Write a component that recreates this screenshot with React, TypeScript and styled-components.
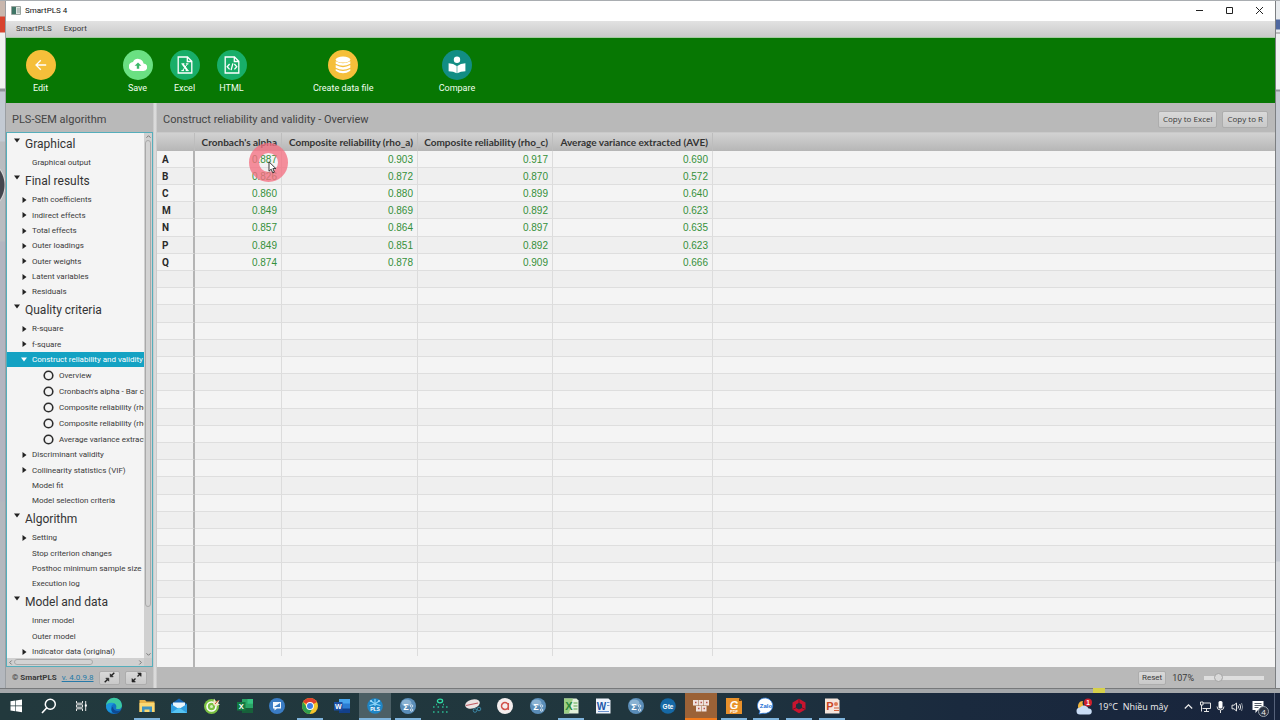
import React from "react";
import styled, { createGlobalStyle, css } from "styled-components";

const UI = `Roboto, "Open Sans", sans-serif`;
const WIDE = `"Open Sans", "Noto Sans", sans-serif`;
const HEAD = `Roboto, "Liberation Sans", sans-serif`;

const GlobalStyle = createGlobalStyle`
  *, *::before, *::after { box-sizing: border-box; }
  body { margin: 0; font-family: ${UI}; font-size: 8px; color: #3a3a3a; }
  button, input { font: inherit; color: inherit; }
  ul { list-style: none; margin: 0; padding: 0; }
  svg { display: block; flex: none; }
`;

/* ---------- frame ---------- */

const Screen = styled.div`
  height: 100vh;
  min-height: 480px;
  display: flex;
  flex-direction: column;
  overflow: hidden;
  background: #a9adb1;
`;

const Desktop = styled.div`
  flex: 1;
  min-height: 0;
  display: flex;
  padding-top: 1px;
`;

const LeftSliver = styled.div`
  width: 6px;
  background:
    radial-gradient(circle at -22px 184px, #45464e 26px, #d8d8d8 27px, transparent 28px),
    linear-gradient(
      #c9b7ae 0 15px, #d8432f 16px 31px, #f1f1f1 32px 87px, #8f9499 88px 90px,
      #c3cad3 91px 140px, #b9bcc0 141px 240px, #b3b5c0 241px 500px, #b4b8be 501px 100%
    );
  border-right: 1px solid #9b9fa3;
`;

const RightSliver = styled.div`
  width: 5px;
  border-left: 1px solid #7c7f82;
  background: linear-gradient(
    #e8ebee 0 18px, #4f68a0 19px 28px, #e8ebee 29px 31px, #888 32px, #f0f1f2 33px 88px,
    #8f9499 89px 90px, #c4c9d2 91px 560px, #d6d9de 561px 100%
  );
`;

const BottomSliver = styled.div`
  height: 5px;
  display: flex;
  justify-content: flex-end;
  padding-right: 175px;
  background: linear-gradient(#77797b 0 1px, #a5a8ab 1px 5px);
  &::after {
    content: "";
    width: 12px;
    background: #d6d04a;
  }
`;

const Window = styled.div`
  flex: 1;
  min-width: 0;
  display: flex;
  flex-direction: column;
  background: #b9b9b9;
`;

const TitleBar = styled.header`
  height: 20px;
  flex: none;
  display: flex;
  align-items: center;
  padding: 0 1px 1px 5px;
  background: #fff;
  color: #111;
`;

const TitleText = styled.h1`
  flex: 1;
  margin: 0 0 0 4px;
  font-size: 8px;
  font-weight: 400;
`;

const WindowButton = styled.button`
  width: 30px;
  height: 18px;
  padding: 0;
  border: 0;
  background: none;
  display: flex;
  align-items: center;
  justify-content: center;
`;

const MenuBar = styled.nav`
  height: 17px;
  flex: none;
  display: flex;
  align-items: center;
  gap: 12px;
  padding-left: 10px;
  background: linear-gradient(#e2e2e2, #cacaca);
  border-bottom: 1px solid #a3cba0;
`;

const MenuButton = styled.button`
  padding: 0;
  border: 0;
  background: none;
  line-height: 14px;
`;

/* ---------- toolbar ---------- */

const Toolbar = styled.div`
  height: 65px;
  flex: none;
  display: flex;
  align-items: center;
  padding: 4px 0 0 11px;
  background: #077703;
`;

const ToolGroup = styled.div<{ $before?: number }>`
  display: flex;
  margin-left: ${(p) => p.$before ?? 0}px;
`;

const ToolButton = styled.button`
  min-width: 47px;
  padding: 0;
  border: 0;
  background: none;
  color: #f2fff0;
  font-family: ${HEAD};
  font-size: 9px;
  line-height: 13px;
  display: flex;
  flex-direction: column;
  align-items: center;
  gap: 2px;
  white-space: nowrap;
`;

const Disc = styled.span<{ $color: string }>`
  width: 30px;
  height: 30px;
  border-radius: 50%;
  background: ${(p) => p.$color};
  display: flex;
  align-items: center;
  justify-content: center;
`;

/* ---------- body ---------- */

const Body = styled.div`
  flex: 1;
  min-height: 0;
  display: flex;
`;

const Side = styled.aside`
  width: 147px;
  flex: none;
  display: flex;
  flex-direction: column;
`;

const Divider = styled.div`
  width: 4px;
  flex: none;
  background: linear-gradient(90deg, #c4c4c4, #e2e2e2, #c4c4c4);
`;

const Main = styled.main`
  flex: 1;
  min-width: 0;
  display: flex;
  flex-direction: column;
`;

const PanelHead = styled.div`
  height: 29px;
  flex: none;
  display: flex;
  align-items: center;
  gap: 5px;
  padding: 3px 7px 0 6px;
`;

const PanelTitle = styled.h2`
  flex: 1;
  margin: 0;
  font-family: ${HEAD};
  font-size: 11px;
  font-weight: 400;
  color: #444;
  white-space: nowrap;
`;

const Footer = styled.footer<{ $end?: boolean }>`
  height: 21px;
  flex: none;
  display: flex;
  align-items: center;
  justify-content: ${(p) => (p.$end ? "flex-end" : "flex-start")};
  gap: 5px;
  padding: 0 ${(p) => (p.$end ? 11 : 6)}px;
  white-space: nowrap;
`;

const SmallButton = styled.button<{ $tall?: boolean }>`
  height: ${(p) => (p.$tall ? 17 : 14)}px;
  padding: 0 ${(p) => (p.$tall ? 4 : 3)}px;
  border: 1px solid #adadad;
  border-radius: 2px;
  background: linear-gradient(#d9d9d9, #c9c9c9);
  font-family: ${(p) => (p.$tall ? WIDE : UI)};
  line-height: 12px;
  display: flex;
  align-items: center;
  white-space: nowrap;
`;

const IconButton = styled(SmallButton)`
  width: 22px;
  padding: 0;
  justify-content: center;
`;

/* ---------- tree ---------- */

const TreeFrame = styled.div`
  flex: 1;
  min-height: 0;
  display: grid;
  grid-template: minmax(0, 1fr) 8px / minmax(0, 1fr) 8px;
  border: 1px solid #55aebb;
  background: #c8c8c8;
`;

const Tree = styled.div`
  overflow: hidden;
  background: #f4f4f4;
`;

const Twisty = styled.button<{ $w: number; $top?: boolean }>`
  width: ${(p) => p.$w}px;
  height: 14px;
  padding: 0 5px 0 0;
  border: 0;
  background: none;
  display: flex;
  justify-content: flex-end;
  align-items: center;
  flex: none;
  ${(p) => p.$top && css`align-self: flex-start;`}
`;

const GroupRow = styled.div`
  height: 22px;
  display: flex;
  align-items: center;
  font-size: 12px;
  color: #333;
  white-space: nowrap;
`;

const ItemRow = styled.li<{ $selected?: boolean }>`
  height: 15px;
  display: flex;
  align-items: center;
  white-space: nowrap;
  &:nth-child(3n + 2) { height: 16px; }
  ${(p) => p.$selected && css`
    background: #14a2c3;
    color: #fff;
  `}
`;

const ChartRow = styled.li`
  height: 16px;
  display: flex;
  align-items: center;
  gap: 5px;
  padding-left: 36px;
  white-space: nowrap;
`;

const ScrollTrack = styled.div<{ $across?: boolean }>`
  display: flex;
  flex-direction: ${(p) => (p.$across ? "row" : "column")};
  align-items: center;
  justify-content: space-between;
  background: #d0d0d0;
`;

const Thumb = styled.div<{ $across?: boolean }>`
  ${(p) =>
    p.$across
      ? css`width: 58%; height: 6px; margin-right: auto;`
      : css`height: 89%; width: 6px; margin-bottom: auto;`}
  border: 1px solid #a9a9a9;
  border-radius: 3px;
  background: #d3d3d3;
`;

const Brand = styled.strong`
  font-family: ${HEAD};
`;

const VersionLink = styled.a`
  color: #2679a8;
`;

/* ---------- table ---------- */

const TableArea = styled.div`
  flex: 1;
  min-height: 0;
  overflow: hidden;
  background: #f4f4f4;
  border-top: 1px solid #c9c9c9;
`;

const Table = styled.table`
  width: 100%;
  table-layout: fixed;
  border-collapse: separate;
  border-spacing: 0;
`;

const HeadCell = styled.th`
  height: 18px;
  padding: 0 4px 0 0;
  background: linear-gradient(#d2d2d2, #b6b6b6);
  border-right: 1px solid #bdbdbd;
  font-family: Lato, sans-serif;
  font-size: 10px;
  line-height: 12px;
  color: #333;
  text-align: right;
  white-space: nowrap;
  &:last-child { border-right: 0; }
`;

const Row = styled.tr`
  height: 17px;
  background: #f4f4f4;
  &:nth-child(even) { background: #efefef; }
  &:nth-child(5n) { height: 18px; }
`;

const RowLabel = styled.th`
  padding: 1px 0 0 5px;
  border-right: 2px solid #b4b4b4;
  border-bottom: 1px solid #dedede;
  font-family: ${HEAD};
  font-size: 10px;
  line-height: 12px;
  color: #2a2a2a;
  text-align: left;
`;

const Cell = styled.td`
  position: relative;
  padding: 1px 4px 0 0;
  border-right: 1px solid #dcdcdc;
  border-bottom: 1px solid #dedede;
  font-family: "Liberation Sans", Arial, sans-serif;
  font-size: 10px;
  line-height: 12px;
  color: #35903a;
  text-align: right;
  &:last-child { border-right: 0; }
`;

const TailRow = styled.tr<{ $h: number }>`
  height: ${(p) => p.$h}px;
  th { padding: 0; border-right: 2px solid #b4b4b4; }
  td { padding: 0; }
  td:not(:last-child) { border-right: 1px solid #dcdcdc; }
`;

const ClickRing = styled.span`
  position: absolute;
  z-index: 1;
  top: -8px;
  right: -7px;
  width: 39px;
  height: 39px;
  border: 10px solid rgba(243, 112, 130, 0.78);
  border-radius: 50%;
  svg { position: absolute; left: 9px; top: 8px; }
`;

const Percent = styled.output`
  margin: 0 5px 0 1px;
  font-size: 9px;
`;

const ZoomSlider = styled.input`
  appearance: none;
  width: 60px;
  height: 10px;
  margin: 0;
  background: linear-gradient(#0000 3px, #dedede 3px 7px, #0000 7px);
  &::-webkit-slider-thumb {
    appearance: none;
    width: 9px;
    height: 9px;
    border: 1px solid #a4a4a4;
    border-radius: 50%;
    background: #d9d9d9;
  }
`;

/* ---------- taskbar ---------- */

const Taskbar = styled.footer`
  height: 27px;
  flex: none;
  display: flex;
  justify-content: space-between;
  background: linear-gradient(90deg, #22393d, #20363e 50%, #1a2a3e 75%, #18243c);
  color: #f0f0f0;
`;

const AppList = styled.div`
  flex: 0 1 848px;
  display: flex;
`;

type Mark = "none" | "open" | "active" | "alert";

const AppButton = styled.button<{ $mark: Mark }>`
  flex: 1;
  min-width: 0;
  padding: 0;
  border: 0;
  background: ${(p) => (p.$mark === "active" ? "#4c5f65" : p.$mark === "alert" ? "#9b6237" : "none")};
  display: flex;
  flex-direction: column;
  align-items: center;
  justify-content: space-between;
  &::before { content: ""; height: 1px; }
  &::after {
    content: "";
    height: 2px;
    width: ${(p) => (p.$mark === "open" ? "26px" : "100%")};
    background: ${(p) => (p.$mark === "none" ? "transparent" : p.$mark === "alert" ? "#f07a1c" : "#7fb4dc")};
  }
`;

const Tray = styled.div`
  display: flex;
  align-items: center;
  gap: 4px;
  padding-right: 2px;
`;

const TrayButton = styled.button<{ $after?: number }>`
  position: relative;
  padding: 0;
  border: 0;
  background: none;
  margin-right: ${(p) => p.$after ?? 0}px;
  display: flex;
  align-items: center;
  gap: 5px;
  font-family: ${WIDE};
  font-size: 9px;
  white-space: nowrap;
`;

const Badge = styled.span`
  position: absolute;
  left: 6px;
  top: 6px;
  width: 11px;
  height: 11px;
  border: 1px solid #9aa3ad;
  border-radius: 50%;
  background: #2a3342;
  font-size: 8px;
  line-height: 9px;
  text-align: center;
`;

const ShowDesktop = styled.button`
  width: 4px;
  height: 27px;
  padding: 0;
  border: 0;
  border-left: 1px solid #56627a;
  background: none;
`;

/* ---------- icons ---------- */

const Down = ({ fill = "#222" }: { fill?: string }) => (
  <svg width="6" height="5" viewBox="0 0 6 5"><path d="M0 .5h6L3 4.5z" fill={fill} /></svg>
);
const Right = () => (
  <svg width="5" height="6" viewBox="0 0 5 6"><path d="M.5 0v6L4.5 3z" fill="#222" /></svg>
);
const Chevron = ({ turn }: { turn: number }) => (
  <svg width="7" height="7" viewBox="0 0 7 7">
    <path d="M1.5 4.7 3.5 2.7 5.5 4.7" fill="none" stroke="#777" transform={`rotate(${turn} 3.5 3.5)`} />
  </svg>
);
const Ring = () => (
  <svg width="11" height="11" viewBox="0 0 11 11"><circle cx="5.5" cy="5.5" r="4.3" fill="none" stroke="#2c2c2c" strokeWidth="1.6" /></svg>
);

const BackIcon = () => (
  <svg width="14" height="14" viewBox="0 0 14 14" fill="none" stroke="#fff" strokeWidth="1.3"><path d="M12.2 7H2M6.8 2.2 2 7l4.8 4.8" /></svg>
);
const CloudIcon = () => (
  <svg width="18" height="14" viewBox="0 0 24 18">
    <path d="M19.4 7A7.5 7.5 0 0 0 5.3 5 6 6 0 0 0 6 17h13a5 5 0 0 0 .4-10z" fill="#fff" />
    <path d="M12 5.5 7.5 10H10.4v4h3.2v-4h2.9z" fill="#3cb86b" />
  </svg>
);
const SheetIcon = ({ code }: { code?: boolean }) => (
  <svg width="16" height="18" viewBox="0 0 16 18" fill="none" stroke="#fff" strokeWidth="1.3">
    <path d="M1.2 1h9.3L14.8 5.3V17H1.2zM10.3 1v4.5h4.5" />
    {code ? <path d="M5.6 8 3.2 10.7 5.6 13.4M10.4 8l2.4 2.7-2.4 2.7M8.9 7.3 7.1 14.1" /> : (
      <>
        <path d="M5.6 8 10.4 14.5" strokeWidth="2" />
        <path d="M10.4 8 5.6 14.5M4.4 7.8h3M8.9 7.8h2.6M4.4 14.6h2.6M8.7 14.6h3" strokeWidth="1" />
      </>
    )}
  </svg>
);
const DataIcon = () => (
  <svg width="16" height="18" viewBox="0 0 16 18">
    <ellipse cx="8" cy="3.6" rx="7.3" ry="3" fill="#fff" />
    <path d="M.7 5.2q7.3 4.2 14.6 0v2.6q-7.3 4-14.6 0zM.7 9.1q7.3 4.2 14.6 0v2.6q-7.3 4-14.6 0zM.7 13q7.3 4.2 14.6 0v1.8q-7.3 5-14.6 0z" fill="#fff" />
  </svg>
);
const ReaderIcon = () => (
  <svg width="18" height="18" viewBox="0 0 18 18" fill="#fff">
    <circle cx="9" cy="3.8" r="3.2" />
    <path d="M.6 7.3Q5.5 7.3 8.7 10v7.2Q5.5 15.2.6 15.200zM17.4 7.3Q12.5 7.3 9.3 10v7.2q3.2-2 8.1-2z" />
  </svg>
);
const Shrink = () => (
  <svg width="11" height="11" viewBox="0 0 11 11" stroke="#222" fill="#222" strokeWidth="1.4">
    <path d="M10.3.7 7.5 3.5M.7 10.3 3.5 7.5" /><path d="M6.2 1.8v3h3zM1.8 6.2h3v3z" strokeWidth=".6" />
  </svg>
);
const Grow = () => (
  <svg width="11" height="11" viewBox="0 0 11 11" stroke="#222" fill="#222" strokeWidth="1.4">
    <path d="M9.5 1.5 6.5 4.5M1.5 9.5 4.5 6.5" /><path d="M6.7 1h3.4v3.4zM1 6.6V10h3.4z" strokeWidth=".6" />
  </svg>
);
const PointerIcon = () => (
  <svg width="9" height="13" viewBox="0 0 9 13"><path d="M1 .8v9.4l2.2-2 1.5 3.6 1.7-.7L4.9 7.6h3z" fill="#fff" stroke="#222" strokeWidth=".9" /></svg>
);

const Ico = ({ children }: { children: React.ReactNode }) => (
  <svg width="18" height="18" viewBox="0 0 18 18">{children}</svg>
);
const glyph = { fontFamily: "Liberation Sans, sans-serif", fontWeight: 700, textAnchor: "middle" as const, fill: "#fff" };

const Sigma = () => (
  <Ico>
    <circle cx="9" cy="9" r="8" fill="#5a8db8" /><ellipse cx="7.5" cy="6" rx="5" ry="3.6" fill="#8bb3d3" />
    <text x="7" y="12.5" fontSize="9" {...glyph}>Σ</text>
    <circle cx="12.6" cy="9" r="1.2" fill="none" stroke="#fff" strokeWidth=".7" /><circle cx="12.6" cy="13" r="1.2" fill="none" stroke="#fff" strokeWidth=".7" />
  </Ico>
);

const apps: { name: string; mark?: Mark; icon: React.ReactNode }[] = [
  { name: "Start", icon: <Ico><path d="M3.5 4.300 8.300 3.600v5H3.500zM8.900 3.500 15 2.600v6H8.900zM3.500 9.200h4.800v5l-4.800-.7zM8.900 9.200H15v6l-6.100-.9z" fill="#fff" /></Ico> },
  { name: "Search", icon: <Ico><circle cx="10.3" cy="7.2" r="5" fill="none" stroke="#fff" strokeWidth="1.5" /><path d="M6.8 10.8 2 16" stroke="#fff" strokeWidth="1.6" /></Ico> },
  { name: "Task View", icon: <Ico><path d="M3.5 4v2.2h6V4M3.5 14v-2.2h6V14M3.5 7.8h6v2.4h-6zM12.7 4v10" fill="none" stroke="#e6e6e6" strokeWidth="1" /><path d="M11.8 7.5h2v2h-2z" fill="#fff" /></Ico> },
  { name: "Edge", icon: <Ico><circle cx="9" cy="9" r="8" fill="#1273c4" /><path d="M1 9a8 8 0 0 1 16-.6c0 2.5-2 3.6-4 3.6-2.4 0-2.2-1-1.6-1.8C11.5 7 9.5 6 7.200 6 4 6 1.800 7.500 1 9z" fill="#3cc8a0" /><path d="M1 9C2 5.5 7.500 5 9.500 7 6 7 4.500 12 8 15.500 4 16 1 13 1 9z" fill="#1a95dc" /><path d="M8 9.500c0 4 4 5.500 8 3.700-2 3.300-5.500 4.200-8 2.600-2-1.300-2-4.800 0-6.300z" fill="#0d4a94" /></Ico> },
  { name: "File Explorer", mark: "open", icon: <Ico><path d="M1.500 3h5.500l1.500 1.500h8V15h-15z" fill="#e9b44a" /><path d="M1.500 6h15v9h-15z" fill="#fbd872" /><path d="M4 9.500h10V15h-2.500v-2.500h-5V15H4z" fill="#3f92c0" /></Ico> },
  { name: "Mail", icon: <Ico><path d="M1 7 9 1.500 17 7v9H1z" fill="#1767b5" /><path d="M3 5.500h12V11H3z" fill="#e9f5fc" /><path d="M1 7l8 5 8-5v9H1z" fill="#2f9ee0" /><path d="M1 16l8-5.500L17 16z" fill="#55c4f3" /></Ico> },
  { name: "Browser", icon: <Ico><circle cx="8.500" cy="9.500" r="7.500" fill="#7cc243" /><circle cx="8.500" cy="9.500" r="4.500" fill="none" stroke="#fff" strokeWidth="1.600" /><circle cx="8.500" cy="9.500" r="1.500" fill="#d9efc4" /><path d="m10 7 1-5.500L13 5l3.500-2L15 6.500l2 1-4.500 2z" fill="#f0e8c8" /><path d="M12 7l3.500-4" stroke="#d44c33" /></Ico> },
  { name: "Excel", icon: <Ico><path d="M6 2h11v14H6z" fill="#2aa566" /><path d="M11.500 2H17v4.700h-5.500z" fill="#36c481" /><path d="M6 11h11v5H6z" fill="#17603a" /><path d="M1 5h8.500v8.500H1z" fill="#127a41" /><text x="5.200" y="12" fontSize="7.500" {...glyph}>X</text></Ico> },
  { name: "Remote", icon: <Ico><circle cx="9" cy="9" r="8" fill="#3a7cc4" /><path d="M5 5h8v6.500H9L6.500 13.500v-2H5z" fill="#f2f8ff" /><path d="M6 10 12 6v4z" fill="#3a7cc4" /></Ico> },
  { name: "Chrome", mark: "open", icon: <Ico><circle cx="9" cy="9" r="8" fill="#f5c52b" /><path d="M9 9 2.100 5A8 8 0 0 1 15.900 5z" fill="#e0402f" /><path d="M2.100 5A8 8 0 0 0 8.500 17L12 10.500H6z" fill="#2f9e4f" /><circle cx="9" cy="9" r="3.900" fill="#fff" /><circle cx="9" cy="9" r="3" fill="#3f7fe8" /></Ico> },
  { name: "Word", icon: <Ico><path d="M6 2h11v14H6z" fill="#2b7cd3" /><path d="M6 2h11v4.500H6z" fill="#48a5ee" /><path d="M6 11.500h11V16H6z" fill="#12408c" /><path d="M1 5h8.500v8.500H1z" fill="#1b4fa3" /><text x="5.200" y="11.800" fontSize="7" {...glyph}>W</text></Ico> },
  { name: "SmartPLS", mark: "active", icon: <Ico><circle cx="9" cy="9" r="7.800" fill="#1f86c6" /><path d="M9 2v7M9 7 5 4M9 7l4-3M3.500 8.500 9 7l5.500 1.500" stroke="#8fd6fa" strokeWidth="1.100" fill="none" /><circle cx="5" cy="4" r="1" fill="#aee2ff" /><circle cx="13" cy="4" r="1" fill="#aee2ff" /><text x="9" y="14" fontSize="5" {...glyph}>PLS</text></Ico> },
  { name: "SPSS", mark: "open", icon: <Sigma /> },
  { name: "AMOS", icon: <Ico><ellipse cx="9" cy="4" rx="2.600" ry="1.800" fill="none" stroke="#2fe0a6" strokeWidth="1.300" /><path d="M2 10h1.600M6.500 10h1.600M11 10h1.600M15 10h1.600M2 15h1.600M6.500 15h1.600M11 15h1.600M15 15h1.600M5 7.500h1M12 7.500h1" stroke="#2bb890" strokeWidth="1.500" /></Ico> },
  { name: "Snipping Tool", icon: <Ico><ellipse cx="8.500" cy="7" rx="7.500" ry="4.500" fill="#ece3e3" transform="rotate(-15 8.500 7)" /><path d="M2 8.500 14 6" stroke="#c05a62" strokeWidth="1.200" /><circle cx="11" cy="13.500" r="1.800" fill="none" stroke="#3c87a5" /><circle cx="15" cy="12" r="1.800" fill="none" stroke="#3c87a5" /></Ico> },
  { name: "Reader", icon: <Ico><circle cx="9" cy="9" r="8" fill="#f4eeee" /><path d="M12.300 6v7M12.300 9a3.400 3.400 0 1 1-6.800 0 3.400 3.400 0 0 1 6.800 0" fill="none" stroke="#d2544c" strokeWidth="1.500" /></Ico> },
  { name: "SPSS Viewer", icon: <Sigma /> },
  { name: "Excel 2010", mark: "open", icon: <Ico><path d="M2 1.500h12.500l2 2V16.500H2z" fill="#e3f1dc" /><path d="M2 1.500h9L7 16.500H2z" fill="#9ccf85" /><text x="7" y="13" fontSize="11" {...glyph} fill="#2c8a3a">X</text><path d="M11.500 6h4M11.500 9h4M11.500 12h4" stroke="#5aa74f" /></Ico> },
  { name: "Word 2010", icon: <Ico><path d="M2 1.500h12.500l2 2V16.500H2z" fill="#eef3fb" /><text x="7.500" y="12.500" fontSize="10" {...glyph} fill="#2056a8">W</text><path d="M13 5.500h2.500M13 8.500h2.500M4 14.500h11" stroke="#6c94ce" /></Ico> },
  { name: "SPSS Data", icon: <Sigma /> },
  { name: "Lite", icon: <Ico><circle cx="9" cy="9" r="7.800" fill="#1669a6" /><text x="9" y="11.500" fontSize="6.500" {...glyph}>Gte</text></Ico> },
  { name: "UniKey", mark: "alert", icon: <Ico><path d="M1 3h5v5.500H1zM6.500 3h5v5.500h-5zM12 3h5v5.500h-5zM4 9h5v5.500H4zM9.500 9h5v5.500h-5z" fill="#efe2de" /><path d="M3 5.500h1.500M8.500 5.500H10M14 5.500h1.500M6 11.500h1.500M11.500 11.500H13" stroke="#b8544c" strokeWidth="1.500" /></Ico> },
  { name: "Foxit PDF", mark: "open", icon: <Ico><path d="M1 1h13l3 3v13H1z" fill="#e8912b" /><path d="M14 1v3h3z" fill="#5d3a14" /><text x="9" y="11.500" fontSize="11" fontStyle="italic" {...glyph}>G</text><text x="9" y="16" fontSize="4" {...glyph}>PDF</text></Ico> },
  { name: "Zalo", mark: "open", icon: <Ico><path d="M9 1a8 7.500 0 1 1-3 15.300L2 17l1-3A8 7.500 0 0 1 9 1z" fill="#fff" stroke="#2c79d8" strokeWidth=".8" /><text x="9" y="11" fontSize="6" {...glyph} fill="#2470d6">Zalo</text></Ico> },
  { name: "Recorder", mark: "open", icon: <Ico><path d="M9 1.800 15.500 5.500v7L9 16.200 2.500 12.500v-7z" fill="#c8152f" /><path d="M9 5.800l3 1.700v3.400L9 12.500 6 10.900V7.500z" fill="#1d3140" /><path d="M9 1.800V6M15.500 12.500 12 10.800M2.500 12.500 6 10.800" stroke="#7b0f22" /></Ico> },
  { name: "PowerPoint", mark: "open", icon: <Ico><path d="M2 1.500h12.500l2 2V16.500H2z" fill="#f6e5dc" /><text x="7" y="12.500" fontSize="11" {...glyph} fill="#c8431f">P</text><circle cx="13" cy="7" r="2" fill="#e07a55" /><path d="M11 11h5M11 13.500h5" stroke="#d5633c" /></Ico> },
];

/* ---------- data ---------- */

const columns = ["Cronbach's alpha", "Composite reliability (rho_a)", "Composite reliability (rho_c)", "Average variance extracted (AVE)"];
const rows: [string, string[]][] = [
  ["A", ["0.887", "0.903", "0.917", "0.690"]],
  ["B", ["0.826", "0.872", "0.870", "0.572"]],
  ["C", ["0.860", "0.880", "0.899", "0.640"]],
  ["M", ["0.849", "0.869", "0.892", "0.623"]],
  ["N", ["0.857", "0.864", "0.897", "0.635"]],
  ["P", ["0.849", "0.851", "0.892", "0.623"]],
  ["Q", ["0.874", "0.878", "0.909", "0.666"]],
];
const EMPTY_ROWS = 22;

type Node = { label: string; kind?: "closed" | "open" | "leaf" };
type Section = { title?: string; items: Node[]; charts?: string[] };

const sections: Section[] = [
  { title: "Graphical", items: [{ label: "Graphical output", kind: "leaf" }] },
  {
    title: "Final results",
    items: ["Path coefficients", "Indirect effects", "Total effects", "Outer loadings", "Outer weights", "Latent variables", "Residuals"].map((label) => ({ label })),
  },
  {
    title: "Quality criteria",
    items: [{ label: "R-square" }, { label: "f-square" }, { label: "Construct reliability and validity", kind: "open" }],
    charts: ["Overview", "Cronbach's alpha - Bar chart", "Composite reliability (rho_a) - Bar chart", "Composite reliability (rho_c) - Bar chart", "Average variance extracted (AVE)"],
  },
  {
    items: [{ label: "Discriminant validity" }, { label: "Collinearity statistics (VIF)" }, { label: "Model fit", kind: "leaf" }, { label: "Model selection criteria", kind: "leaf" }],
  },
  {
    title: "Algorithm",
    items: [{ label: "Setting" }, { label: "Stop criterion changes", kind: "leaf" }, { label: "Posthoc minimum sample size", kind: "leaf" }, { label: "Execution log", kind: "leaf" }],
  },
  {
    title: "Model and data",
    items: [{ label: "Inner model", kind: "leaf" }, { label: "Outer model", kind: "leaf" }, { label: "Indicator data (original)" }],
  },
];

const ResultTree = () => (
  <Tree>
    {sections.map((s, i) => (
      <section key={i}>
        {s.title && (
          <GroupRow>
            <Twisty $w={18} $top aria-label={`Collapse ${s.title}`}><Down /></Twisty>
            {s.title}
          </GroupRow>
        )}
        <ul>
          {s.items.map((n) => (
            <ItemRow key={n.label} $selected={n.kind === "open"}>
              <Twisty $w={25} aria-label={n.label} disabled={n.kind === "leaf"}>
                {n.kind === "open" ? <Down fill="#fff" /> : n.kind === "leaf" ? null : <Right />}
              </Twisty>
              {n.label}
            </ItemRow>
          ))}
        </ul>
        {s.charts && <ul>{s.charts.map((c) => <ChartRow key={c}><Ring />{c}</ChartRow>)}</ul>}
      </section>
    ))}
  </Tree>
);

const ResultTable = () => (
  <Table>
    <colgroup>
      <col style={{ width: 38 }} /><col style={{ width: 87 }} /><col style={{ width: 136 }} /><col style={{ width: 135 }} /><col style={{ width: 160 }} /><col />
    </colgroup>
    <thead>
      <tr>
        <HeadCell />
        {columns.map((c) => <HeadCell key={c} scope="col">{c}</HeadCell>)}
        <HeadCell />
      </tr>
    </thead>
    <tbody>
      {rows.map(([name, values], r) => (
        <Row key={name}>
          <RowLabel scope="row">{name}</RowLabel>
          {values.map((v, c) => (
            <Cell key={c}>
              {v}
              {r === 0 && c === 0 && <ClickRing><PointerIcon /></ClickRing>}
            </Cell>
          ))}
          <Cell />
        </Row>
      ))}
      {Array.from({ length: EMPTY_ROWS }, (_, r) => (
        <Row key={r}><RowLabel />{[0, 1, 2, 3, 4].map((c) => <Cell key={c} />)}</Row>
      ))}
    </tbody>
    <tfoot>
      <TailRow $h={7}><th /><td /><td /><td /><td /><td /></TailRow>
      <TailRow $h={12}><th /><td colSpan={5} /></TailRow>
    </tfoot>
  </Table>
);

export default function App() {
  return (
    <Screen>
      <GlobalStyle />
      <Desktop>
        <LeftSliver />
        <Window>
          <TitleBar>
            <svg width="10" height="9" viewBox="0 0 10 9"><path d="M.5.5h9v8h-9z" fill="#dfe5e2" stroke="#9aa5a0" /><path d="M1 1h4v7H1z" fill="#3f7566" /><path d="M6 2h3v5H6z" fill="#b9c4c0" /></svg>
            <TitleText>SmartPLS 4</TitleText>
            <WindowButton aria-label="Minimize"><svg width="9" height="9" viewBox="0 0 9 9"><path d="M1 4.500h7" stroke="#222" /></svg></WindowButton>
            <WindowButton aria-label="Maximize"><svg width="9" height="9" viewBox="0 0 9 9"><path d="M1.500 1.500h6v6h-6z" fill="none" stroke="#222" /></svg></WindowButton>
            <WindowButton aria-label="Close"><svg width="9" height="9" viewBox="0 0 9 9"><path d="m1 1 7 7M8 1 1 8" stroke="#222" /></svg></WindowButton>
          </TitleBar>
          <MenuBar>
            <MenuButton>SmartPLS</MenuButton>
            <MenuButton>Export</MenuButton>
          </MenuBar>
          <Toolbar>
            <ToolGroup><ToolButton><Disc $color="#f5bf3a"><BackIcon /></Disc>Edit</ToolButton></ToolGroup>
            <ToolGroup $before={50}>
              <ToolButton><Disc $color="#6ae082"><CloudIcon /></Disc>Save</ToolButton>
              <ToolButton><Disc $color="#18ae69"><SheetIcon /></Disc>Excel</ToolButton>
              <ToolButton><Disc $color="#18ae69"><SheetIcon code /></Disc>HTML</ToolButton>
            </ToolGroup>
            <ToolGroup $before={58}><ToolButton><Disc $color="#f5bf3a"><DataIcon /></Disc>Create data file</ToolButton></ToolGroup>
            <ToolGroup $before={60}><ToolButton><Disc $color="#128d84"><ReaderIcon /></Disc>Compare</ToolButton></ToolGroup>
          </Toolbar>
          <Body>
            <Side>
              <PanelHead><PanelTitle>PLS-SEM algorithm</PanelTitle></PanelHead>
              <TreeFrame>
                <ResultTree />
                <ScrollTrack><Chevron turn={0} /><Thumb /><Chevron turn={180} /></ScrollTrack>
                <ScrollTrack $across><Chevron turn={-90} /><Thumb $across /><Chevron turn={90} /></ScrollTrack>
              </TreeFrame>
              <Footer>
                <Brand>© SmartPLS</Brand>
                <VersionLink href="#version">v. 4.0.9.8</VersionLink>
                <IconButton aria-label="Collapse all"><Shrink /></IconButton>
                <IconButton aria-label="Expand all"><Grow /></IconButton>
              </Footer>
            </Side>
            <Divider />
            <Main>
              <PanelHead>
                <PanelTitle>Construct reliability and validity - Overview</PanelTitle>
                <SmallButton $tall>Copy to Excel</SmallButton>
                <SmallButton $tall>Copy to R</SmallButton>
              </PanelHead>
              <TableArea><ResultTable /></TableArea>
              <Footer $end>
                <SmallButton>Reset</SmallButton>
                <Percent>107%</Percent>
                <ZoomSlider type="range" min={0} max={500} defaultValue={100} aria-label="Zoom" />
              </Footer>
            </Main>
          </Body>
        </Window>
        <RightSliver />
      </Desktop>
      <BottomSliver />
      <Taskbar>
        <AppList>
          {apps.map((a) => <AppButton key={a.name} $mark={a.mark ?? "none"} aria-label={a.name}>{a.icon}</AppButton>)}
        </AppList>
        <Tray>
          <TrayButton $after={12}>
            <svg width="18" height="18" viewBox="0 0 18 18"><path d="M8 3a5 5 0 0 0 5 7L5 12A5 5 0 0 1 8 3z" fill="#f0b53c" /><path d="M5 16.500a3.500 3.500 0 0 1 0-7 5 5 0 0 1 8.500 1 3 3 0 0 1 .5 6z" fill="#c9dcf5" /><circle cx="13" cy="4.500" r="4" fill="#d0202c" /><text x="13" y="7" fontSize="6.500" {...glyph}>1</text></svg>
            <span>19°C&nbsp; Nhiều mây</span>
          </TrayButton>
          <TrayButton aria-label="Show hidden icons" $after={2}><svg width="9" height="9" viewBox="0 0 9 9"><path d="M.8 6.500 4.500 2.800 8.200 6.500" fill="none" stroke="#eee" strokeWidth="1.200" /></svg></TrayButton>
          <TrayButton aria-label="Network" $after={1}><svg width="12" height="12" viewBox="0 0 12 12" fill="none" stroke="#e4e4e4"><path d="M4 2h7.500v5.500H3.500M7.500 7.500V10M5 10.500h5M1.500 1v3h2.500V1zM2.500 4v6.500" /></svg></TrayButton>
          <TrayButton aria-label="Microphone" $after={2}><svg width="9" height="12" viewBox="0 0 9 12"><rect x="2.500" y="0" width="4" height="7.500" rx="1.500" fill="#fff" /><path d="M1 5.500q0 3.500 3.500 3.500T8 5.500M4.500 9v3" fill="none" stroke="#ddd" /></svg></TrayButton>
          <TrayButton aria-label="Volume" $after={5}><svg width="12" height="12" viewBox="0 0 12 12" fill="none" stroke="#e4e4e4"><path d="M1 4.200h2L5.500 2v8L3 7.800H1z" /><path d="M7 4.500q1 1.500 0 3M8.700 3q2 3 0 6" /><path d="M10.500 2q2.300 4 0 8" stroke="#8a929c" /></svg></TrayButton>
          <TrayButton aria-label="Notifications" $after={6}>
            <svg width="12" height="14" viewBox="0 0 12 14"><path d="M.5 1h11v9H6l-2.500 3v-3h-3z" fill="#fff" /><path d="M2.500 3.500h7M2.500 5.500h7M2.500 7.500h4" stroke="#2a3342" strokeWidth=".8" /></svg>
            <Badge>4</Badge>
          </TrayButton>
          <ShowDesktop aria-label="Show desktop" />
        </Tray>
      </Taskbar>
    </Screen>
  );
}
